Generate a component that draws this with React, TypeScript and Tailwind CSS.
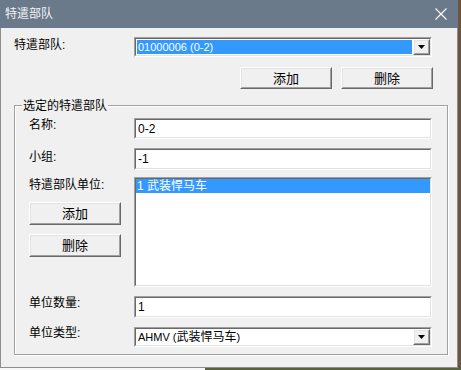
import React from "react";

function Sunken({ className = "", innerClassName = "", children }: { className?: string; innerClassName?: string; children?: React.ReactNode }) {
  return (
    <div className={"border border-t-[#a0a0a0] border-l-[#a0a0a0] border-b-white border-r-white box-border " + className}>
      <div className={"h-full w-full border border-t-[#696969] border-l-[#696969] border-b-[#e3e3e3] border-r-[#e3e3e3] bg-white box-border " + innerClassName}>
        {children}
      </div>
    </div>
  );
}

function Raised({ className = "", children }: { className?: string; children?: React.ReactNode }) {
  return (
    <div className={"border border-t-white border-l-white border-b-[#696969] border-r-[#696969] box-border " + className}>
      <div className="h-full w-full border border-t-[#e3e3e3] border-l-[#e3e3e3] border-b-[#a0a0a0] border-r-[#a0a0a0] bg-[#f0f0f0] flex items-center justify-center box-border">
        {children}
      </div>
    </div>
  );
}

function Arrow() {
  return (
    <svg width="7" height="4" viewBox="0 0 7 4">
      <polygon points="0,0 7,0 3.5,4" fill="#000" />
    </svg>
  );
}

function Combo({ selected, children }: { selected?: boolean; children?: React.ReactNode }) {
  return (
    <Sunken className="w-[298px] h-[20px]" innerClassName="flex">
      <div className={"flex-1 m-[1px] flex items-center pl-[1px] leading-none " + (selected ? "bg-[#3399ff] text-white" : "bg-white text-black")}>
        {children}
      </div>
      <Raised className="w-[17px] h-full">
        <Arrow />
      </Raised>
    </Sunken>
  );
}

function Btn({ label, className = "" }: { label: string; className?: string }) {
  return (
    <Raised className={"w-[92px] " + className}>
      <span className="text-[13px] leading-none text-black">{label}</span>
    </Raised>
  );
}

export default function App() {
  return (
    <div className="w-[461px] h-[370px] flex flex-col bg-[#6a5a44] overflow-hidden font-['Liberation_Sans','Noto_Sans_CJK_SC',sans-serif] text-[12px] text-black">
      <div className="flex">
        <div className="w-[458px] h-[368px] flex flex-col">
          {/* Title bar */}
          <div className="h-[28px] bg-[#6a7a8b] flex items-center justify-between pl-[5px] pr-[11px]">
            <span className="text-[12px] leading-none text-[#f4f4f4]">特遣部队</span>
            <svg width="12" height="12" viewBox="0 0 12 12">
              <path d="M0.5 0.5 L11.5 11.5 M11.5 0.5 L0.5 11.5" stroke="#ffffff" strokeWidth="1.1" />
            </svg>
          </div>
          {/* Body */}
          <div className="flex-1 bg-[#f0f0f0] border-l border-r border-b border-[#8e8e8e] pl-[13px] pt-[9px] box-border">
            <div className="flex items-start">
              <div className="w-[120px] leading-[16px]">特遣部队:</div>
              <Combo selected>
                <span className="text-[11px]">01000006 (0-2)</span>
              </Combo>
            </div>
            <div className="flex gap-[9px] pl-[226px] mt-[10px]">
              <Btn label="添加" className="h-[22px]" />
              <Btn label="删除" className="h-[22px]" />
            </div>
            {/* Group box */}
            <div className="relative mt-[16px] w-[434px] h-[250px] box-border border border-[#a0a0a0] shadow-[inset_1px_1px_0_#ffffff,1px_1px_0_#ffffff] pl-[14px] pt-[12px]">
              <div className="absolute -top-[8px] left-[7px] px-[1px] bg-[#f0f0f0] leading-[16px]">选定的特遣部队</div>
              <div className="flex items-start">
                <div className="w-[105px] leading-[16px] -mt-[1px]">名称:</div>
                <Sunken className="w-[298px] h-[21px]" innerClassName="flex items-center pl-[2px]">
                  <span className="text-[12px] leading-none">0-2</span>
                </Sunken>
              </div>
              <div className="flex items-start mt-[9px]">
                <div className="w-[105px] leading-[16px] mt-[1px]">小组:</div>
                <Sunken className="w-[298px] h-[22px]" innerClassName="flex items-center pl-[2px]">
                  <span className="text-[12px] leading-none">-1</span>
                </Sunken>
              </div>
              <div className="flex items-start mt-[7px]">
                <div className="w-[105px] flex flex-col">
                  <div className="leading-[16px]">特遣部队单位:</div>
                  <Btn label="添加" className="h-[23px] mt-[9px]" />
                  <Btn label="删除" className="h-[23px] mt-[9px]" />
                </div>
                <Sunken className="w-[298px] h-[110px]">
                  <div className="h-[14px] bg-[#3399ff] text-white flex items-center pl-[1px] leading-none">
                    <span className="text-[12px]">1 武装悍马车</span>
                  </div>
                </Sunken>
              </div>
              <div className="flex items-start mt-[9px]">
                <div className="w-[105px] leading-[16px] -mt-[1px]">单位数量:</div>
                <Sunken className="w-[298px] h-[22px]" innerClassName="flex items-center pl-[2px]">
                  <span className="text-[12px] leading-none">1</span>
                </Sunken>
              </div>
              <div className="flex items-start mt-[9px]">
                <div className="w-[105px] leading-[16px] -mt-[2px]">单位类型:</div>
                <Combo>
                  <span className="text-[11px]">AHMV (</span>
                  <span className="text-[12px]">武装悍马车</span>
                  <span className="text-[11px]">)</span>
                </Combo>
              </div>
            </div>
          </div>
        </div>
        <div className="flex-1 bg-[#6b5540]" />
      </div>
      <div className="flex-1 flex">
        <div className="w-[205px] bg-[#f7f7f7]" />
        <div className="flex-1 bg-[#58603f]" />
      </div>
    </div>
  );
}
